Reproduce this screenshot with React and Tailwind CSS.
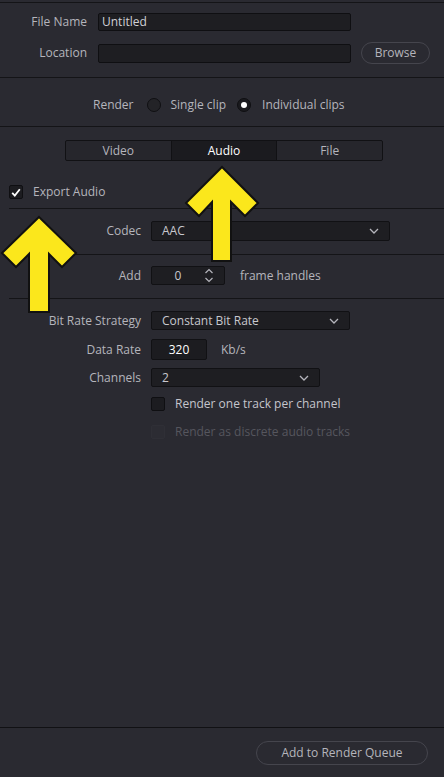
import React from 'react';

function Chevron({ className = '' }) {
  return (
    <svg width="10" height="6" viewBox="0 0 10 6" className={className}>
      <polyline points="1,1 5,5 9,1" fill="none" stroke="#b5b5bc" strokeWidth="1.3" />
    </svg>
  );
}

function Dropdown({ value, width }) {
  return (
    <div
      className={`flex h-[19px] items-center justify-between rounded-[2px] border border-[#111114] bg-[#1e1e22] pl-[10px] pr-[10px] text-[#c8c8ce] ${width}`}
    >
      <span>{value}</span>
      <Chevron />
    </div>
  );
}

function Label({ children }) {
  return <div className="w-[151px] shrink-0 pr-[10px] text-right text-[#b5b5bc]">{children}</div>;
}

function Checkbox({ checked, disabled }) {
  return (
    <div
      className={`flex h-[14px] w-[14px] shrink-0 items-center justify-center rounded-[2px] border ${
        disabled ? 'border-[#2f2f36] bg-[#2c2c33]' : 'border-[#0f0f12] bg-[#1c1c20]'
      }`}
    >
      {checked && (
        <svg width="10" height="9" viewBox="0 0 10 9">
          <polyline points="1.2,4.8 3.8,7.6 8.8,1.2" fill="none" stroke="#ffffff" strokeWidth="1.8" />
        </svg>
      )}
    </div>
  );
}

function Arrows() {
  return (
    <svg
      className="pointer-events-none absolute left-0 top-0"
      width="444"
      height="777"
      viewBox="0 0 444 777"
    >
      <polygon
        points="39,217 76,253 62,267 49,254 49,312 29,312 29,254 16,267 2,253"
        fill="#fbe71c"
        stroke="#111"
        strokeWidth="2"
        strokeLinejoin="miter"
      />
      <polygon
        points="222,167 258,203 245,216 231,202 231,261 212,261 212,202 199,216 186,203"
        fill="#fbe71c"
        stroke="#111"
        strokeWidth="2"
        strokeLinejoin="miter"
      />
    </svg>
  );
}

export default function App() {
  return (
    <div className="relative flex h-[777px] w-full flex-col overflow-hidden bg-[#2a2a31] font-['Open_Sans',sans-serif] text-[12px] leading-[16px] text-[#b5b5bc]">
      <div className="mt-[2px] border-t border-[#141417]" />

      {/* file name / location */}
      <div className="mt-[10px] flex h-[18px] items-center">
        <div className="w-[87px] text-right">File Name</div>
        <div className="ml-[11px] flex h-[18px] w-[253px] items-center rounded-[2px] border border-[#0f0f12] bg-[#1e1e22] pl-[3px] text-[#d0d0d6]">
          Untitled
        </div>
      </div>
      <div className="mt-[11px] flex h-[22px] items-center">
        <div className="w-[87px] text-right">Location</div>
        <div className="ml-[11px] h-[19px] w-[253px] rounded-[2px] border border-[#0f0f12] bg-[#1e1e22]" />
        <button className="ml-[10px] flex h-[22px] w-[69px] items-center justify-center rounded-full border border-[#45454d] text-[#b5b5bc]">
          Browse
        </button>
      </div>

      <div className="mt-[13px] border-t border-[#141417]" />

      {/* render */}
      <div className="flex h-[48px] items-center pl-[93px] pt-[6px]">
        <span>Render</span>
        <span className="ml-[13px] h-[14px] w-[14px] rounded-full border border-[#0f0f12] bg-[#232327]" />
        <span className="ml-[10px]">Single clip</span>
        <span className="ml-[11px] flex h-[14px] w-[14px] items-center justify-center rounded-full border border-[#0f0f12] bg-[#1a1a1e]">
          <span className="h-[6px] w-[6px] rounded-full bg-white" />
        </span>
        <span className="ml-[11px]">Individual clips</span>
      </div>

      <div className="border-t border-[#141417]" />

      {/* tabs */}
      <div className="ml-[65px] mt-[13px] flex h-[21px] w-[318px] overflow-hidden rounded-[2px] border border-[#111114] bg-[#26262c] text-[12px]">
        <div className="flex flex-1 items-center justify-center text-[#b5b5bc]">Video</div>
        <div className="flex flex-1 items-center justify-center border-x border-[#111114] bg-[#1b1b1f] text-white">
          Audio
        </div>
        <div className="flex flex-1 items-center justify-center text-[#b5b5bc]">File</div>
      </div>

      {/* export audio */}
      <div className="ml-[9px] mt-[24px] flex h-[14px] items-center">
        <Checkbox checked />
        <span className="ml-[10px] text-[#b5b5bc]">Export Audio</span>
      </div>

      <div className="ml-[9px] mt-[9px] border-t border-[#141417]" />

      <div className="mt-[12px] flex h-[20px] items-center">
        <Label>Codec</Label>
        <Dropdown value="AAC" width="w-[239px] h-[20px]" />
      </div>

      <div className="ml-[9px] mt-[13px] border-t border-[#141417]" />

      <div className="mt-[11px] flex h-[19px] items-center">
        <Label>Add</Label>
        <div className="flex h-[19px] w-[74px] items-center rounded-[2px] border border-[#111114] bg-[#1e1e22] text-[#c8c8ce]">
          <span className="w-[52px] text-center">0</span>
          <svg width="10" height="15" viewBox="0 0 10 15">
            <polyline points="1.5,5 5,1.5 8.5,5" fill="none" stroke="#b5b5bc" strokeWidth="1.2" />
            <polyline points="1.5,10 5,13.5 8.5,10" fill="none" stroke="#b5b5bc" strokeWidth="1.2" />
          </svg>
        </div>
        <span className="ml-[15px]">frame handles</span>
      </div>

      <div className="ml-[9px] mt-[13px] border-t border-[#141417]" />

      <div className="mt-[12px] flex h-[19px] items-center">
        <Label>Bit Rate Strategy</Label>
        <Dropdown value="Constant Bit Rate" width="w-[199px]" />
      </div>

      <div className="mt-[9px] flex h-[21px] items-center">
        <Label>Data Rate</Label>
        <div className="flex h-[21px] w-[56px] items-center justify-center rounded-[2px] border border-[#111114] bg-[#1c1c20] text-white">
          320
        </div>
        <span className="ml-[14px]">Kb/s</span>
      </div>

      <div className="mt-[8px] flex h-[19px] items-center">
        <Label>Channels</Label>
        <Dropdown value="2" width="w-[169px]" />
      </div>

      <div className="ml-[151px] mt-[10px] flex h-[14px] items-center">
        <Checkbox />
        <span className="ml-[10px] text-[#c5c5cc]">Render one track per channel</span>
      </div>

      <div className="ml-[151px] mt-[14px] flex h-[14px] items-center">
        <Checkbox disabled />
        <span className="ml-[10px] text-[#56565e]">Render as discrete audio tracks</span>
      </div>

      <div className="flex-1" />

      <div className="border-t border-[#111114]" />
      <div className="mt-[13px] mb-[12px] flex h-[24px] justify-end pr-[16px]">
        <button className="flex h-[24px] w-[172px] items-center justify-center rounded-full border border-[#45454d] text-[#b5b5bc]">
          Add to Render Queue
        </button>
      </div>

      <Arrows />
    </div>
  );
}
